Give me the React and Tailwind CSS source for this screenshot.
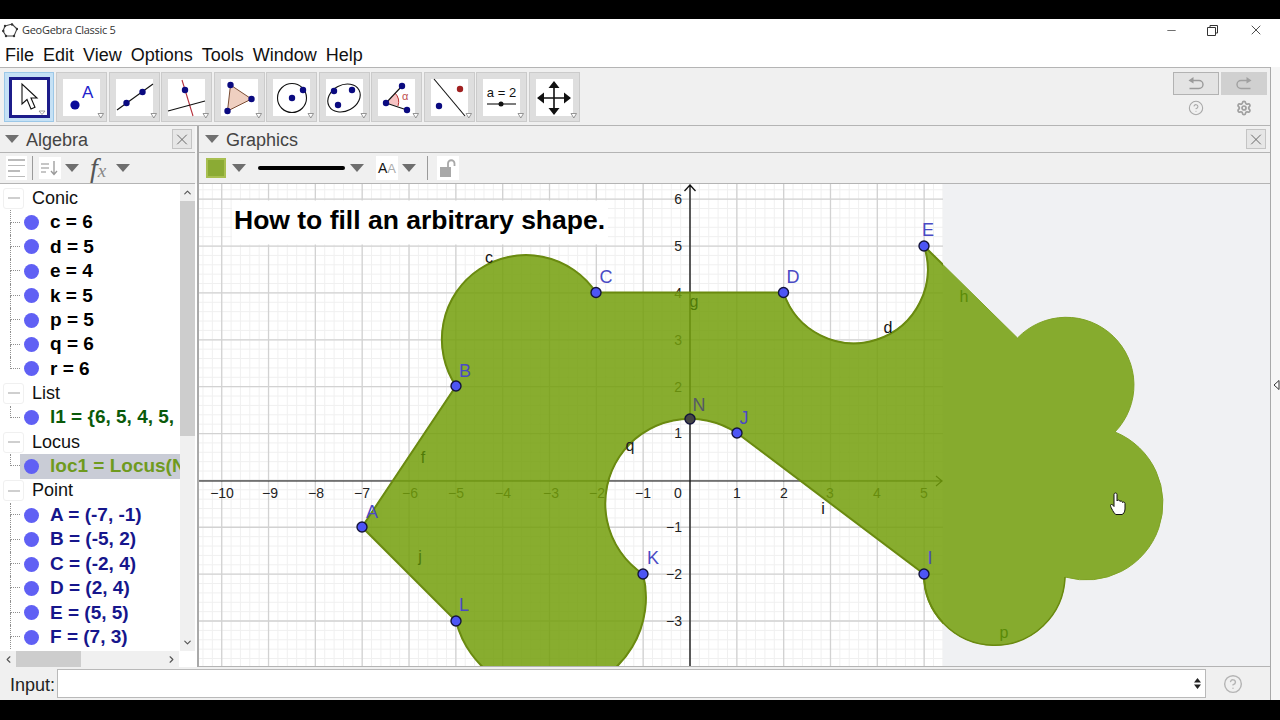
import React from "react";
import { CircleHelp, Settings, X, Minus, ChevronUp, ChevronDown, ChevronLeft, ChevronRight } from "lucide-react";

const Caret = ({ className = "" }) => (
  <svg width="14" height="8" viewBox="0 0 14 8" className={className}><path d="M0 0H14L7 8Z" fill="#6e6e6e" /></svg>
);
const Collapse = ({ className = "" }) => (
  <svg width="14" height="8" viewBox="0 0 14 8" className={className}><path d="M0 0H14L7 8Z" fill="#707070" /></svg>
);
const CloseBox = ({ className = "" }) => (
  <div className={`w-[20px] h-[20px] bg-[#e6e6e6] border border-[#c4c4c4] flex items-center justify-center ${className}`}>
    <X size={19} strokeWidth={1.3} color="#666" />
  </div>
);

const D = ({ x, y, r = 3.2, c = "#0a0a80" }) => <circle cx={x} cy={y} r={r} fill={c} />;
const Tri = () => <path d="M35 34.5H40.5L37.8 39Z" fill="#fff" stroke="#8a8a8a" strokeWidth="0.9" />;

const icons = [
  <>
    <circle cx="12" cy="26" r="4.6" fill="#0a0a9a" />
    <text x="19" y="19" fontSize="17" fill="#2222cc" fontFamily="Liberation Sans">A</text>
  </>,
  <>
    <line x1="1" y1="31" x2="37" y2="5" stroke="#111" strokeWidth="1.1" />
    <D x={10.5} y={24} /><D x={26.5} y={13} />
  </>,
  <>
    <line x1="14" y1="1" x2="25" y2="37" stroke="#b5303c" strokeWidth="1.1" />
    <line x1="0" y1="32" x2="37" y2="22" stroke="#111" strokeWidth="1.1" />
    <D x={17} y={11} />
  </>,
  <>
    <polygon points="9.5,6 30.5,20 6.5,32" fill="#efcfc0" stroke="#7a4c34" strokeWidth="1" />
    <D x={9.5} y={6} /><D x={30.5} y={20} /><D x={6.5} y={32} />
  </>,
  <>
    <circle cx="19" cy="19" r="14.5" fill="none" stroke="#111" strokeWidth="1.1" />
    <D x={19} y={19} /><D x={30} y={11} />
  </>,
  <>
    <ellipse cx="18" cy="19" rx="17" ry="13" transform="rotate(-28 18 19)" fill="none" stroke="#111" strokeWidth="1.1" />
    <D x={8} y={12} /><D x={26} y={11} /><D x={12} y={26} />
  </>,
  <>
    <path d="M8 24L17 14A13 13 0 0 1 20 27Z" fill="#f6c3c3" stroke="none" />
    <path d="M17 14A13 13 0 0 1 20 27" fill="none" stroke="#b83030" strokeWidth="1" />
    <line x1="8" y1="24" x2="24" y2="7" stroke="#111" strokeWidth="1.1" />
    <line x1="8" y1="24" x2="29" y2="31" stroke="#111" strokeWidth="1.1" />
    <text x="24" y="21" fontSize="11" fill="#c05050" fontFamily="Liberation Sans">α</text>
    <D x={8} y={24} /><D x={24} y={7} /><D x={29} y={31} />
  </>,
  <>
    <line x1="3" y1="0" x2="34" y2="37" stroke="#111" strokeWidth="1.1" />
    <D x={8} y={27} /><D x={29} y={10} c="#a02020" />
  </>,
  <>
    <text x="18.5" y="18" fontSize="13" textAnchor="middle" fill="#111" fontFamily="Liberation Sans">a = 2</text>
    <line x1="4" y1="25" x2="33" y2="25" stroke="#111" strokeWidth="1.1" />
    <circle cx="18" cy="25" r="2.5" fill="#111" />
  </>,
  <>
    <path d="M18 7V31M6 19H30" stroke="#111" strokeWidth="1.6" />
    <path d="M18 2L12.5 9H23.5ZM18 36L12.5 29H23.5ZM1 19L8 13.5V24.5ZM35 19L28 13.5V24.5Z" fill="#111" />
  </>,
];

const ToolButton = ({ children }) => (
  <div className="w-[51px] h-[50px] bg-[#dedede] border border-[#cbcbcb] flex items-center justify-center">
    <div className="w-[37px] h-[37px] bg-white">
      <svg width="37" height="37" viewBox="0 0 37 37" className="overflow-visible">{children}<Tri /></svg>
    </div>
  </div>
);

const Toolbar = () => (
  <div className="h-[59px] bg-[#f0f0f0] border-y border-[#b4b4b4] flex items-start pt-[4px] pl-[4px] pr-[3px]">
    <div className="w-[50px] h-[50px] bg-[#c5e1f5] border border-[#9cc8e8] flex items-center justify-center mr-[2px]">
      <div className="w-[41px] h-[41px] bg-white border-[3px] border-[#1c1c8a]">
        <svg width="35" height="35" viewBox="0 0 35 35">
          <path d="M10 4V24L15 19.5L19 29L23 27.2L19 18H25Z" fill="#fff" stroke="#111" strokeWidth="1.1" />
          <path d="M27 31H33L30 34.5Z" fill="#fff" stroke="#8a8a8a" strokeWidth="0.8" />
        </svg>
      </div>
    </div>
    <div className="flex gap-[1.5px]">
      {icons.map((ic, i) => <ToolButton key={i}>{ic}</ToolButton>)}
    </div>
    <div className="ml-auto flex flex-col items-center w-[94px]">
      <div className="flex gap-[2px]">
        <div className="w-[46px] h-[23px] bg-[#e3e3e3] border border-[#b2b2b2] flex items-center justify-center">
          <svg width="16" height="13" viewBox="0 0 16 13"><path d="M3 3.5H11A4 4 0 0 1 11 11.5H1.5" fill="none" stroke="#9a9a9a" strokeWidth="1.4" /><path d="M5.5 0L0.5 3.5L5.5 6.5Z" fill="#9a9a9a" /></svg>
        </div>
        <div className="w-[46px] h-[23px] bg-[#d0d0d0] flex items-center justify-center">
          <svg width="16" height="13" viewBox="0 0 16 13"><path d="M13 3.5H5A4 4 0 0 0 5 11.5H14.5" fill="none" stroke="#a0a0a0" strokeWidth="1.4" /><path d="M10.5 0L15.5 3.5L10.5 6.5Z" fill="#a0a0a0" /></svg>
        </div>
      </div>
      <div className="flex justify-between w-[64px] mt-[5px]">
        <CircleHelp size={16} strokeWidth={1.6} color="#a8a8a8" />
        <Settings size={16} strokeWidth={2.6} color="#a0a0a0" />
      </div>
    </div>
  </div>
);

const Connector = ({ last }) => (
  <div className="w-[10px] self-stretch flex flex-col shrink-0">
    <div className="h-1/2 border-l border-b border-dotted border-[#8f8f8f]" />
    {!last && <div className="h-1/2 border-l border-dotted border-[#8f8f8f]" />}
  </div>
);

const Head = ({ children }) => (
  <div className="h-[24.4px] flex items-center pl-[3px]">
    <div className="w-[21px] h-[21px] rounded-[3px] border border-[#f0f0f0] bg-white flex items-center justify-center">
      <div className="w-[12px] h-[2px] bg-[#cfcfcf]" />
    </div>
    <span className="ml-[8px] text-[18px] text-[#111]">{children}</span>
  </div>
);

const Item = ({ text, color, last, selected }) => (
  <div className="h-[24.4px] flex items-stretch pl-[10px]">
    <Connector last={last} />
    <div className={`flex-1 flex items-center min-w-0 overflow-hidden ${selected ? "bg-[#c9ccd6]" : ""}`}>
      <div className="w-[15px] h-[15px] rounded-full bg-[#6060f4] ml-[4px] shrink-0" />
      <span className={`ml-[11px] text-[19px] font-bold whitespace-nowrap ${color}`}>{text}</span>
    </div>
  </div>
);

const AlgebraPanel = () => (
  <div className="w-[199px] shrink-0 flex flex-col border-r-2 border-[#a9a9a9]">
    <div className="h-[27px] bg-[#f0f0f0] border-b border-[#b4b4b4] flex items-center mr-[2px]">
      <Collapse className="ml-[5px]" />
      <span className="ml-[7px] pt-[2px] text-[18px] text-[#444]">Algebra</span>
      <CloseBox className="ml-auto mr-[3px]" />
    </div>
    <div className="h-[31px] bg-[#f0f0f0] border-b border-[#b4b4b4] flex items-center mr-[2px]">
      <div className="ml-[6px] w-[21px] h-[24px] bg-white flex flex-col justify-center gap-[4px] pl-[2px]">
        <div className="w-[17px] h-[1.5px] bg-[#bbbbbb]" />
        <div className="w-[17px] h-[1.5px] bg-[#bbbbbb]" />
        <div className="w-[12px] h-[1.5px] bg-[#bbbbbb]" />
        <div className="w-[17px] h-[1.5px] bg-[#bbbbbb]" />
      </div>
      <div className="w-px h-[24px] bg-[#9a9a9a] ml-[5px]" />
      <div className="ml-[6px] w-[22px] h-[22px] bg-white flex items-center justify-center">
        <svg width="20" height="16" viewBox="0 0 20 16"><path d="M1 4H9M1 8H9M1 12H6" stroke="#b4b4b4" strokeWidth="1.3" /><path d="M14 1V14M11 11L14 14.5L17 11" fill="none" stroke="#999" strokeWidth="1.3" /></svg>
      </div>
      <Caret className="ml-[4px]" />
      <span className="ml-[11px] w-[25px] font-['Liberation_Serif'] italic text-[28px] leading-none text-[#555]">f<span className="text-[19px] text-[#888]">x</span></span>
      <Caret className="ml-[1px]" />
    </div>
    <div className="flex-1 flex flex-col min-h-0 bg-white">
      <div className="flex flex-1 min-h-0">
        <div className="w-[180px] pt-[2px] overflow-hidden shrink-0">
          <Head>Conic</Head>
          <Item text="c = 6" color="text-black" />
          <Item text="d = 5" color="text-black" />
          <Item text="e = 4" color="text-black" />
          <Item text="k = 5" color="text-black" />
          <Item text="p = 5" color="text-black" />
          <Item text="q = 6" color="text-black" />
          <Item text="r = 6" color="text-black" last />
          <Head>List</Head>
          <Item text="l1 = {6, 5, 4, 5," color="text-[#0a5a0a]" last />
          <Head>Locus</Head>
          <Item text="loc1 = Locus(N" color="text-[#6f9a1e]" last selected />
          <Head>Point</Head>
          <Item text="A = (-7, -1)" color="text-[#16168c]" />
          <Item text="B = (-5, 2)" color="text-[#16168c]" />
          <Item text="C = (-2, 4)" color="text-[#16168c]" />
          <Item text="D = (2, 4)" color="text-[#16168c]" />
          <Item text="E = (5, 5)" color="text-[#16168c]" />
          <Item text="F = (7, 3)" color="text-[#16168c]" />
        </div>
        <div className="w-[15px] bg-[#f0f0f0] flex flex-col items-center">
          <div className="h-[17px] flex items-center"><ChevronUp size={11} strokeWidth={2.5} color="#555" /></div>
          <div className="w-full h-[235px] bg-[#cdcdcd]" />
          <div className="mt-auto h-[17px] flex items-center"><ChevronDown size={11} strokeWidth={2.5} color="#555" /></div>
        </div>
        <div className="w-[2px]" />
      </div>
      <div className="h-[16px] w-[179px] bg-[#f0f0f0] flex items-center">
        <div className="w-[16px] flex justify-center"><ChevronLeft size={11} strokeWidth={2.5} color="#555" /></div>
        <div className="w-[65px] h-full bg-[#cdcdcd]" />
        <div className="ml-auto w-[16px] flex justify-center"><ChevronRight size={11} strokeWidth={2.5} color="#555" /></div>
      </div>
    </div>
  </div>
);

const GraphicsHeader = () => (
  <>
    <div className="h-[27px] bg-[#f0f0f0] border-b border-[#b4b4b4] flex items-center">
      <Collapse className="ml-[6px]" />
      <span className="ml-[7px] pt-[2px] text-[18px] text-[#444]">Graphics</span>
      <CloseBox className="ml-auto mr-[4px]" />
    </div>
    <div className="h-[31px] bg-[#f0f0f0] border-b border-[#b4b4b4] flex items-center">
      <div className="ml-[7px] w-[20px] h-[20px] bg-[#8bab34] border-2 border-[#a8bf50]" />
      <Caret className="ml-[6px]" />
      <div className="ml-[12px] w-[87px] h-[4.5px] rounded-full bg-black" />
      <Caret className="ml-[5px]" />
      <div className="ml-[12px] w-[22px] h-[24px] bg-white flex items-center justify-center text-[14px] leading-none">
        <span className="text-[#111]">A</span><span className="text-[#aaa] text-[13px]">A</span>
      </div>
      <Caret className="ml-[4px]" />
      <div className="ml-[11px] w-px h-[24px] bg-[#9a9a9a]" />
      <div className="ml-[9px] w-[22px] h-[24px] bg-white flex items-center justify-center">
        <svg width="18" height="19" viewBox="0 0 18 19">
          <rect x="1" y="8" width="11" height="10" fill="#a8a8a8" />
          <path d="M9 8V4.5A3.2 3.2 0 0 1 15.5 4.5V7" fill="none" stroke="#a8a8a8" strokeWidth="1.8" />
        </svg>
      </div>
    </div>
  </>
);

const X0 = 690, Y0 = 480.4, UX = 46.83, UY = 46.87;
const xs = (k) => X0 + UX * k;
const ys = (k) => Y0 - UY * k;
const range = (a, b) => Array.from({ length: b - a + 1 }, (_, i) => a + i);

const shape =
  "M362 527 L456 386 A84 84 0 0 1 596 292.5 L783.5 292.5 A73.9 73.9 0 0 0 924 246 L1017.5 338 A67 67 0 0 1 1115 432 A76.8 76.8 0 0 1 1065 577 A70.52 70.52 0 0 1 924 574 L737 433 A84 84 0 0 0 643 574 A96 96 0 0 1 456 621 Z";

const Pt = ({ x, y, c = "#4d55f5" }) => <circle cx={x} cy={y} r="5" fill={c} stroke="#14143c" strokeWidth="1.4" />;
const Lab = ({ x, y, t, c = "#4a4ac4" }) => <text x={x} y={y} textAnchor="middle" fontSize="18" fill={c}>{t}</text>;

const Canvas = () => {
  const xt = [[-10, 222], [-9, 270], [-8, 316], [-7, 362], [-6, 410], [-5, 456], [-4, 503], [-3, 551], [-2, 597], [-1, 643], [0, 678], [1, 737], [2, 784], [3, 830], [4, 877], [5, 924]];
  const yt = [[6, 199], [5, 246], [4, 293], [3, 340], [2, 387], [1, 433], [-1, 527], [-2, 574], [-3, 621]];
  return (
    <svg width="1071" height="482" viewBox="199 184 1071 482" className="block font-['Liberation_Sans']">
      <defs>
        <clipPath id="left"><rect x="199" y="184" width="744" height="482" /></clipPath>
      </defs>
      <rect x="199" y="184" width="1071" height="482" fill="#f0f1f3" />
      <g clipPath="url(#left)">
        <rect x="199" y="184" width="744" height="482" fill="#fff" />
        {range(-55, 30).map((k) => <line key={k} x1={xs(k / 5)} x2={xs(k / 5)} y1="184" y2="666" stroke="#f0f0f0" strokeWidth="1" />)}
        {range(-20, 35).map((k) => <line key={k} y1={ys(k / 5)} y2={ys(k / 5)} x1="199" x2="943" stroke="#f0f0f0" strokeWidth="1" />)}
        {range(-11, 6).map((k) => <line key={k} x1={xs(k)} x2={xs(k)} y1="184" y2="666" stroke="#d2d2d2" strokeWidth="1.3" />)}
        {range(-4, 7).map((k) => <line key={k} y1={ys(k)} y2={ys(k)} x1="199" x2="943" stroke="#d2d2d2" strokeWidth="1.3" />)}
        <rect x="232" y="200.5" width="376" height="44" fill="#fff" />
        <path d="M199 481H942M936 476L942 481L936 486" fill="none" stroke="#111" strokeWidth="1.2" />
        <path d="M690 666V185M684.5 191L690 185L695.5 191" fill="none" stroke="#111" strokeWidth="1.3" />
      </g>
      <g fontSize="14" fill="#222">
        {xt.map(([k, x]) => <text key={k} x={x} y="498" textAnchor="middle">{k < 0 ? `\u2212${-k}` : k}</text>)}
        {yt.map(([k, y]) => <text key={k} x="682" y={y + 5} textAnchor="end">{k < 0 ? `\u2212${-k}` : k}</text>)}
      </g>
      <text x="234" y="228.5" fontSize="26.5" fontWeight="700" fill="#000">How to fill an arbitrary shape.</text>
      <path d={shape} fill="#739f0a" fillOpacity="0.85" />
      <path d={shape} fill="none" stroke="#7fa326" strokeWidth="1" />
      <path d={shape} fill="none" stroke="#6a8a10" strokeWidth="2" clipPath="url(#left)" />
      <path d="M1065 577A70.52 70.52 0 0 1 924 574" fill="none" stroke="#6a8a10" strokeWidth="1.5" />
      <g fontSize="16">
        <text x="489" y="263" textAnchor="middle" fill="#111">c</text>
        <text x="888" y="333" textAnchor="middle" fill="#111">d</text>
        <text x="694" y="307" textAnchor="middle" fill="#4f7a08">g</text>
        <text x="964" y="302" textAnchor="middle" fill="#5a8a08">h</text>
        <text x="423" y="463" textAnchor="middle" fill="#4f7a08">f</text>
        <text x="420" y="562" textAnchor="middle" fill="#4f7a08">j</text>
        <text x="630" y="451" textAnchor="middle" fill="#222">q</text>
        <text x="823" y="514" textAnchor="middle" fill="#111">i</text>
        <text x="1004" y="638" textAnchor="middle" fill="#5a8a08">p</text>
      </g>
      <Lab x={372} y={518} t="A" />
      <Lab x={465} y={377} t="B" />
      <Lab x={606} y={283} t="C" />
      <Lab x={793} y={283} t="D" />
      <Lab x={928} y={236} t="E" />
      <Lab x={930} y={564} t="I" />
      <Lab x={744} y={424} t="J" />
      <Lab x={653} y={564} t="K" />
      <Lab x={464} y={611} t="L" />
      <Lab x={699} y={411} t="N" c="#555a66" />
      <Pt x={362} y={527} />
      <Pt x={456} y={386} />
      <Pt x={596} y={292.5} />
      <Pt x={783.5} y={292.5} />
      <Pt x={924} y={246} />
      <Pt x={924} y={574} />
      <Pt x={737} y={433} />
      <Pt x={643} y={574} />
      <Pt x={456} y={621} />
      <Pt x={690} y={419} c="#444" />
      <path d="M1114 494.5C1114 492.5 1117 492.5 1117 494.5V501C1117.5 499.5 1120 500 1120 501.5C1120.5 500.5 1122.5 501 1122.5 502.5C1123 501.5 1125 502 1125 503.5V509C1125 512 1123 514.5 1122 514.5H1116C1114.5 514.5 1110.5 507 1110.5 505.5C1110.5 504 1112.5 504 1114 506.5Z" fill="#fff" stroke="#111" strokeWidth="1" />
    </svg>
  );
};

export default function App() {
  return (
    <div className="w-[1280px] h-[720px] bg-black flex flex-col overflow-hidden font-['Liberation_Sans']">
      <div className="h-[19px] shrink-0" />
      <div className="h-[24px] shrink-0 bg-white flex items-center text-[#333] pb-[2px]">
        <svg width="16" height="15" viewBox="0 0 16 15" className="ml-[2px]">
          <polygon points="3,3 10,1 15,6 12,13 4,13 1,8" fill="#fff" stroke="#444" strokeWidth="1.1" />
          <g fill="#333"><circle cx="3" cy="3" r="1.2" /><circle cx="10" cy="1.5" r="1.2" /><circle cx="15" cy="6" r="1.2" /><circle cx="12" cy="13" r="1.2" /><circle cx="4" cy="13" r="1.2" /><circle cx="1.3" cy="8" r="1.2" /></g>
        </svg>
        <span className="ml-[4px] font-['Open_Sans'] text-[11px] tracking-[-0.28px]">GeoGebra Classic 5</span>
        <div className="ml-auto flex items-center">
          <Minus size={13} strokeWidth={1.3} color="#333" className="mr-[29px]" />
          <svg width="11" height="11" viewBox="0 0 11 11" className="mr-[30px]"><path d="M3 2.5V0.5H10.5V8H8.5M0.5 2.5H8.5V10.5H0.5Z" fill="none" stroke="#333" strokeWidth="1" /></svg>
          <X size={16} strokeWidth={1.2} color="#222" className="mr-[16px]" />
        </div>
      </div>
      <div className="h-[24px] shrink-0 bg-white flex items-center pl-[5px] gap-[9px] text-[18px] text-[#111]">
        <span>File</span><span>Edit</span><span>View</span><span>Options</span><span>Tools</span><span>Window</span><span>Help</span>
      </div>
      <div className="flex flex-1 min-h-0 bg-[#f6f6f6]">
        <div className="w-[1271px] shrink-0 border-r border-[#a9a9a9] flex flex-col">
          <Toolbar />
          <div className="flex h-[541px] shrink-0">
            <AlgebraPanel />
            <div className="flex-1 flex flex-col min-w-0 border-b border-[#b4b4b4]">
              <GraphicsHeader />
              <Canvas />
            </div>
          </div>
          <div className="flex-1 bg-[#f0f0f0] flex items-center pl-[10px]">
            <span className="text-[18px] text-[#222] w-[47px] pt-[3px]">Input:</span>
            <div className="w-[1149px] h-[29px] bg-white border border-[#b9b9b9] flex items-center justify-end pr-[4px]">
              <svg width="7" height="11" viewBox="0 0 7 11"><path d="M3.5 0L7 4.5H0ZM3.5 11L0 6.5H7Z" fill="#222" /></svg>
            </div>
            <CircleHelp size={20} strokeWidth={1.7} color="#b4b4b4" className="ml-[17px]" />
          </div>
        </div>
        <div className="flex-1 flex items-center">
          <svg width="7" height="10" viewBox="0 0 7 10" className="ml-[2px] mt-[3px]"><path d="M6 0.5V9.5L1 5Z" fill="#fff" stroke="#333" strokeWidth="1" /></svg>
        </div>
      </div>
      <div className="h-[20px] shrink-0" />
    </div>
  );
}
